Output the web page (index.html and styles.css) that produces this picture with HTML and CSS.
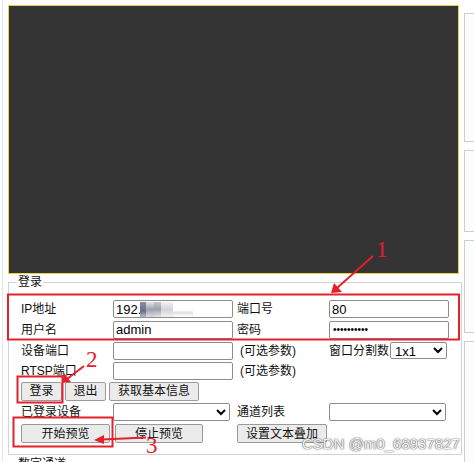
FILE: index.html
```html
<!DOCTYPE html>
<html lang="zh-CN">
  <head>
    <meta charset="UTF-8" />
    <title>预览</title>
    <link rel="stylesheet" href="styles.css">
  </head>
  <body>
    <div class="page">
      <div class="main">
        <div class="video"></div>

        <fieldset class="login">
          <legend>登录</legend>
          <div class="form">
            <span class="label">IP地址</span>
            <div class="cell">
              <input class="text" type="text" value="192." />
              <span class="mosaic">
                <i class="m1"></i><i class="m2"></i><i class="m3"></i><i class="m4"></i><i class="m5"></i>
              </span>
            </div>
            <span class="label">端口号</span>
            <div class="cell"><input class="text" type="text" value="80" /></div>

            <span class="label">用户名</span>
            <div class="cell"><input class="text" type="text" value="admin" /></div>
            <span class="label">密码</span>
            <div class="cell"><input class="text pwd" type="password" value="1234567890" /></div>

            <span class="label">设备端口</span>
            <div class="cell"><input class="text" type="text" value="" /></div>
            <span class="label hint">(可选参数)</span>
            <div class="cell">
              <span class="label">窗口分割数</span>
              <select class="split"><option>1x1</option></select>
            </div>

            <span class="label">RTSP端口</span>
            <div class="cell"><input class="text" type="text" value="" /></div>
            <span class="label hint">(可选参数)</span>
            <span></span>

            <div class="buttons wide">
              <button class="btn w41">登录</button>
              <button class="btn w41">退出</button>
              <button class="btn w90">获取基本信息</button>
            </div>

            <span class="label">已登录设备</span>
            <div class="cell"><select class="pick"><option></option></select></div>
            <span class="label">通道列表</span>
            <div class="cell"><select class="pick"><option></option></select></div>

            <div class="buttons half">
              <button class="btn w89">开始预览</button>
              <button class="btn w88">停止预览</button>
            </div>
            <div class="buttons half">
              <button class="btn w90">设置文本叠加</button>
            </div>
          </div>
        </fieldset>
        <div class="next">数字通道</div>
      </div>

      <div class="side">
        <div class="panel h1"></div>
        <div class="panel h2"></div>
        <div class="panel h3"></div>
        <div class="panel h4"></div>
      </div>
    </div>

    <!-- 标注 -->
    <svg class="marks" width="474" height="462" viewBox="0 0 474 462">
      <g fill="none" stroke="#e3202c" stroke-width="2">
        <rect x="8" y="294.5" width="451" height="45" />
        <rect x="17.5" y="376.5" width="45" height="26" />
        <rect x="13.5" y="417.5" width="99" height="29" />
        <line x1="373" y1="256" x2="337" y2="288" />
        <line x1="84" y1="366" x2="67" y2="379" />
        <line x1="146" y1="437.5" x2="102" y2="439.5" />
      </g>
      <g fill="#e3202c">
        <polygon points="331,293 334,283 342,292" />
        <polygon points="62,383 64,373 71,382" />
        <polygon points="94,440 104,435 104,444" />
      </g>
      <g class="num">
        <text x="376" y="257">1</text>
        <text x="86" y="367">2</text>
        <text x="146" y="453">3</text>
      </g>
    </svg>

    <div class="watermark">CSDN @m0_68937827</div>
  </body>
</html>
```

FILE: styles.css
```css
* {
  box-sizing: border-box;
}

html,
body {
  margin: 0;
  height: 462px;
  overflow: hidden;
  background: #fff;
}

body {
  font-family: "Liberation Sans", "Noto Sans CJK SC", sans-serif;
  font-size: 12px;
  color: #111;
  position: relative;
}

.page {
  display: flex;
}

.main {
  width: 467px;
  margin-left: 2px;
  border-left: 1px solid #e1e5ee;
  padding-left: 5px;
  height: 462px;
}

.video {
  width: 451px;
  height: 269px;
  margin-top: 5px;
  background: #343434;
  border: 1px solid #e9d246;
}

/* 登录 */
.login {
  width: 454px;
  margin: 0;
  padding: 9px 8px 10px 8px;
  border: 1px solid #cfd3db;
}

.login legend {
  padding: 0 1px;
  line-height: 16px;
  font-size: 12px;
}

.form {
  display: grid;
  grid-template-columns: 92px 124px 92px 124px;
  grid-template-rows: 20px 21px 21px 20px 20px 22px 21px;
  padding-left: 4px;
  align-items: center;
}

.label {
  white-space: nowrap;
  line-height: 16px;
}

.hint {
  padding-left: 3px;
}

.cell {
  display: flex;
  align-items: center;
  position: relative;
}

.cell .label {
  width: 61px;
}

.text {
  width: 120px;
  height: 18px;
  padding: 0 2px;
  margin: 0;
  border: 1px solid #8d8d8d;
  border-radius: 2px;
  font-family: "Liberation Sans", sans-serif;
  font-size: 13px;
  color: #000;
  background: #fff;
}

.pwd {
  font-size: 10px;
  padding-left: 3px;
}

.mosaic {
  position: absolute;
  left: 27px;
  top: 2px;
  display: flex;
  height: 15px;
}

.mosaic i {
  display: block;
  height: 100%;
}

.mosaic .m1 {
  width: 6px;
  background: linear-gradient(#8a8ea2, #6a6e86 60%, #b8bac6);
}
.mosaic .m2 {
  width: 8px;
  background: linear-gradient(#e4e4ea, #9da0ae 50%, #d9dae0);
}
.mosaic .m3 {
  width: 7px;
  background: linear-gradient(#c4c6ce, #9fa2ae 50%, #e6e6ea);
}
.mosaic .m4 {
  width: 12px;
  background: linear-gradient(#f2f2f4, #d0d2d8 50%, #f4f4f6);
}
.mosaic .m5 {
  width: 20px;
  background: linear-gradient(#fff, #fff 55%, #e0e1e5 70%, #fff);
}

select {
  height: 18px;
  margin: 0;
  font-family: "Liberation Sans", sans-serif;
  font-size: 13px;
  color: #000;
  background: #fff;
  border: 1px solid #8d8d8d;
  border-radius: 2px;
}

.pick {
  width: 117px;
}

.split {
  width: 57px;
  height: 17px;
}

.buttons {
  display: flex;
  gap: 3px;
}

.wide {
  grid-column: 1 / 5;
}

.half {
  grid-column: span 2;
  gap: 5px;
}

.btn {
  height: 19px;
  padding: 0;
  margin: 0;
  font-family: "Liberation Sans", "Noto Sans CJK SC", sans-serif;
  font-size: 12px;
  line-height: 16px;
  color: #111;
  background: #ebebeb;
  border: 1px solid #9a9a9a;
  border-radius: 2px;
}

.w41 { width: 41px; }
.w88 { width: 88px; }
.w89 { width: 89px; }
.w90 { width: 90px; }

.next {
  padding: 1px 0 0 10px;
  line-height: 16px;
}

/* 오른쪽 패널 */
.side {
  display: flex;
  flex-direction: column;
  gap: 8px;
  margin-left: 2px;
  padding-top: 13px;
}

.panel {
  width: 20px;
  border: 1px solid #c9ced8;
  background: #fbfcfd;
}

.h1 { height: 129px; }
.h2 { height: 82px; }
.h3 { height: 93px; }
.h4 { height: 140px; }

.marks {
  position: absolute;
  left: 0;
  top: 0;
  pointer-events: none;
}

.num text {
  font-family: "Liberation Serif", serif;
  font-size: 23px;
  fill: #e3202c;
}

.watermark {
  position: absolute;
  left: 302px;
  top: 435px;
  font-family: "Liberation Sans", sans-serif;
  font-size: 15px;
  color: #f4f4f4;
  text-shadow: 0 0 1px #6e6e6e, 0 0 1px #6e6e6e, 0 0 2px #9a9a9a;
  white-space: nowrap;
}
```
